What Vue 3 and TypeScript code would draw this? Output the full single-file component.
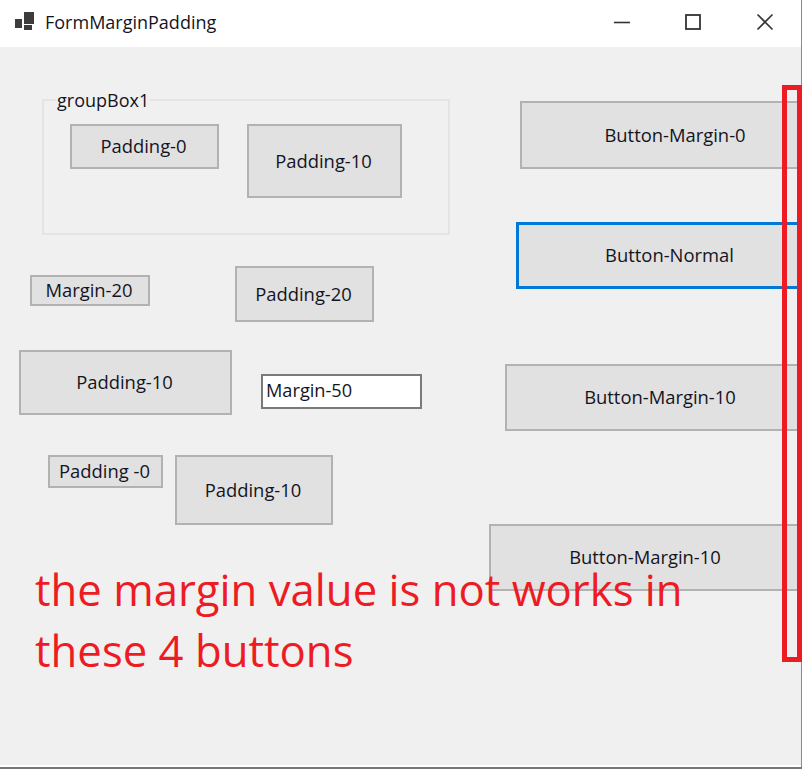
<script setup lang="ts">
interface Ctl { text: string; x: number; y: number; w: number; h: number; focus?: boolean }
const controls: Ctl[] = [
  { text: 'Padding-0', x: 70, y: 124, w: 149, h: 45 },
  { text: 'Padding-10', x: 247, y: 124, w: 155, h: 74 },
  { text: 'Button-Margin-0', x: 520, y: 101, w: 312, h: 68 },
  { text: 'Button-Normal', x: 516, y: 222, w: 309, h: 67, focus: true },
  { text: 'Margin-20', x: 30, y: 275, w: 120, h: 31 },
  { text: 'Padding-20', x: 235, y: 266, w: 139, h: 56 },
  { text: 'Padding-10', x: 19, y: 350, w: 213, h: 65 },
  { text: 'Padding -0', x: 48, y: 455, w: 115, h: 33 },
  { text: 'Padding-10', x: 175, y: 455, w: 158, h: 70 },
  { text: 'Button-Margin-10', x: 505, y: 364, w: 312, h: 67 },
  { text: 'Button-Margin-10', x: 489, y: 524, w: 314, h: 67 },
]
const place = (c: Ctl) => ({
  left: `${c.x}px`,
  top: `${c.y - 47}px`,
  width: `${c.w}px`,
  height: `${c.h}px`,
})
</script>

<template>
  <div class="window">
    <header class="titlebar">
      <svg class="appicon" width="19" height="18" viewBox="0 0 19 18">
        <rect x="0" y="7" width="7" height="9" fill="#3c3c3c" />
        <rect x="9" y="0" width="10" height="12" fill="#3c3c3c" />
        <rect x="9" y="13" width="8" height="5" fill="#3c3c3c" />
      </svg>
      <span class="title">FormMarginPadding</span>
      <div class="caption">
        <svg width="18" height="18" viewBox="0 0 18 18"><path d="M2 9.5H18" stroke="#333" stroke-width="1.6" fill="none" /></svg>
        <svg width="18" height="18" viewBox="0 0 18 18"><rect x="2" y="2" width="14" height="14" stroke="#333" stroke-width="1.8" fill="none" /></svg>
        <svg width="18" height="18" viewBox="0 0 18 18"><path d="M1.5 1.5L16.5 16.5M16.5 1.5L1.5 16.5" stroke="#333" stroke-width="1.6" fill="none" /></svg>
      </div>
    </header>
    <main class="client">
      <fieldset class="group"><legend>groupBox1</legend></fieldset>
      <div
        v-for="(c, i) in controls"
        :key="i"
        class="btn"
        :class="{ focus: c.focus }"
        :style="place(c)"
      ><span class="label">{{ c.text }}</span></div>
      <div class="textbox">Margin-50</div>
      <p class="note">the margin value is not works in<br />these 4 buttons</p>
    </main>
    <div class="edge"></div>
    <div class="mark"></div>
    <div class="ticks"><i></i><i></i><i></i></div>
  </div>
</template>

<style scoped>
.window {
  position: relative;
  width: 802px;
  height: 769px;
  display: flex;
  flex-direction: column;
  overflow: hidden;
  font-family: "Open Sans", "Noto Sans", sans-serif;
  color: #14141f;
  background: #fff;
  box-sizing: border-box;
  border-bottom: 2px solid #777;
}
.titlebar {
  height: 47px;
  flex: none;
  display: flex;
  align-items: center;
  background: #fff;
  padding-left: 15px;
}
.appicon { margin-right: 11px; margin-top: -5px; flex: none; }
.title { font-size: 18px; margin-top: -3px; }
.caption {
  margin-left: auto;
  display: flex;
  gap: 54px;
  padding-right: 28px;
  margin-top: -3px;
}
.client {
  position: relative;
  flex: 1;
  background: #f0f0f0;
  border-bottom: 2px solid #fff;
  overflow: hidden;
}
.group {
  position: absolute;
  left: 42px;
  top: 46px;
  width: 408px;
  height: 142px;
  margin: 0;
  padding: 0 12px;
  box-sizing: border-box;
  border: 2px solid #e4e4e4;
  font-size: 18px;
}
.group legend { padding: 0 1px; line-height: 14px; }
.btn {
  position: absolute;
  box-sizing: border-box;
  display: flex;
  align-items: center;
  justify-content: center;
  background: #e1e1e1;
  border: 2px solid #b2b2b2;
  padding-right: 2px;
  font-size: 18.4px;
}
.btn.focus { border: 3px solid #0078d7; }
.label { white-space: nowrap; margin-top: -2px; }
.textbox {
  position: absolute;
  left: 261px;
  top: 327px;
  width: 161px;
  height: 35px;
  box-sizing: border-box;
  background: #fff;
  border: 2px solid #7a7a7a;
  padding-left: 3px;
  font-size: 18.2px;
  line-height: 29px;
}
.note {
  position: absolute;
  left: 35px;
  top: 512px;
  margin: 0;
  font-size: 43.7px;
  line-height: 61px;
  color: #ed1c24;
  white-space: nowrap;
}
.edge {
  position: absolute;
  top: 0;
  bottom: 0;
  right: 0;
  width: 1px;
  background: #8a8a8a;
}
.mark {
  position: absolute;
  left: 782px;
  top: 85px;
  width: 20px;
  height: 577px;
  box-sizing: border-box;
  border: 5px solid #ed1c24;
}
.ticks {
  position: absolute;
  left: 260px;
  bottom: -2px;
  display: flex;
  gap: 5px;
}
.ticks i {
  display: block;
  width: 3px;
  height: 2px;
  background: #333;
}
</style>

<style>
html, body { margin: 0; background: #f0f0f0; }
</style>
